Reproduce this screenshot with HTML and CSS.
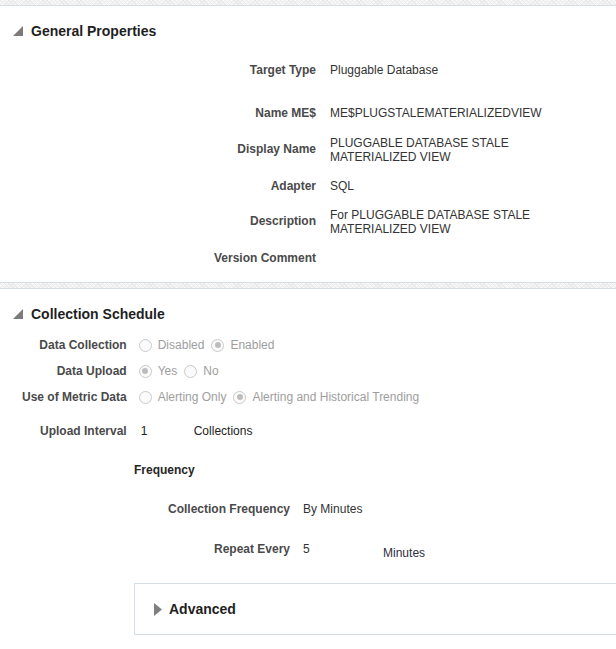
FILE: index.html
```html
<!DOCTYPE html>
<html>
<head>
<meta charset="utf-8">
<title>Metric</title>
<link rel="stylesheet" href="styles.css">
</head>
<body>
<div class="hatch top-strip"></div>

<section class="panel general">
  <h2 class="sec-head">
    <svg class="tri-down" width="10" height="10" viewBox="0 0 10 10"><polygon points="10,0 10,10 0,10"/></svg>
    <span>General Properties</span>
  </h2>
  <div class="props">
    <div class="lbl first">Target Type</div><div class="val first">Pluggable Database</div>
    <div class="lbl second">Name ME$</div><div class="val second">ME$PLUGSTALEMATERIALIZEDVIEW</div>
    <div class="lbl multi">Display Name</div><div class="val">PLUGGABLE DATABASE STALE MATERIALIZED VIEW</div>
    <div class="lbl">Adapter</div><div class="val">SQL</div>
    <div class="lbl multi">Description</div><div class="val">For PLUGGABLE DATABASE STALE MATERIALIZED VIEW</div>
    <div class="lbl">Version Comment</div><div class="val"></div>
  </div>
</section>

<div class="hatch divider"></div>

<section class="panel schedule">
  <h2 class="sec-head">
    <svg class="tri-down" width="10" height="10" viewBox="0 0 10 10"><polygon points="10,0 10,10 0,10"/></svg>
    <span>Collection Schedule</span>
  </h2>
  <div class="sched">
    <div class="lbl">Data Collection</div>
    <div class="opts">
      <span class="opt"><span class="radio"></span>Disabled</span>
      <span class="opt"><span class="radio on"></span>Enabled</span>
    </div>
    <div class="lbl">Data Upload</div>
    <div class="opts">
      <span class="opt"><span class="radio on"></span>Yes</span>
      <span class="opt"><span class="radio"></span>No</span>
    </div>
    <div class="lbl">Use of Metric Data</div>
    <div class="opts">
      <span class="opt"><span class="radio"></span>Alerting Only</span>
      <span class="opt"><span class="radio on"></span>Alerting and Historical Trending</span>
    </div>
    <div class="lbl spaced">Upload Interval</div>
    <div class="interval spaced"><span class="num">1</span><span>Collections</span></div>
  </div>

  <div class="freq">
    <div class="freq-title">Frequency</div>
    <div class="freq-grid">
      <div class="lbl">Collection Frequency</div><div class="fval">By Minutes</div>
      <div class="lbl">Repeat Every</div>
      <div class="fval repeat"><span class="num5">5</span><span class="unit">Minutes</span></div>
    </div>
    <div class="advanced">
      <svg class="tri-right" width="8" height="13" viewBox="0 0 8 13"><polygon points="0,0 8,6.5 0,13"/></svg>
      <span>Advanced</span>
    </div>
  </div>
</section>
</body>
</html>
```

FILE: styles.css
```css
html, body {
  margin: 0;
  padding: 0;
}

body {
  font-family: "Liberation Sans", Arial, sans-serif;
  font-size: 12px;
  color: #333333;
  background: #ffffff;
  overflow: hidden;
}

.hatch {
  background-color: #f7f7f7;
  background-image:
    repeating-linear-gradient(45deg, #e9e9e9 0 1px, transparent 1px 3px),
    repeating-linear-gradient(-45deg, #ededed 0 1px, transparent 1px 3px);
}

.top-strip {
  height: 5px;
  border-bottom: 1px solid #d6dfe6;
}

.divider {
  height: 5px;
  border-top: 1px solid #d6dfe6;
  border-bottom: 1px solid #d6dfe6;
}

.panel {
  padding-top: 16px;
}

.general {
  padding-bottom: 16px;
}

.schedule {
  overflow: hidden;
  padding-bottom: 15px;
}

.sec-head {
  margin: 0;
  display: flex;
  align-items: center;
  gap: 8px;
  padding-left: 13px;
  font-size: 14px;
  line-height: 18px;
  font-weight: bold;
  color: #1f1f1f;
}

.tri-down {
  fill: #7b7b7b;
  display: block;
}

.lbl {
  font-weight: bold;
  color: #4a4a4a;
  line-height: 16px;
  text-align: right;
  white-space: nowrap;
}

/* General properties grid */
.props {
  margin-top: 22px;
  display: grid;
  grid-template-columns: 316px 240px;
  column-gap: 14px;
  row-gap: 14px;
  align-items: center;
}

.val {
  line-height: 14px;
  color: #333333;
}

.props .first {
  margin-bottom: 13px;
}

.props .second {
  margin-bottom: 1px;
}

.props .multi {
  margin-bottom: 2px;
}

/* Collection schedule */
.sched {
  margin-top: 14px;
  padding-left: 22px;
  display: grid;
  grid-template-columns: auto 1fr;
  column-gap: 12px;
  row-gap: 10px;
  align-items: center;
}

.sched .spaced {
  margin-top: 8px;
}

.opts {
  display: flex;
  align-items: center;
  line-height: 16px;
  color: #9e9e9e;
}

.opt {
  display: flex;
  align-items: center;
  margin-right: 7px;
}

.radio {
  width: 11px;
  height: 11px;
  border: 1px solid #c9c9c9;
  border-radius: 50%;
  background: #fbfbfb;
  margin-right: 6px;
  position: relative;
  box-sizing: content-box;
}

.radio.on::after {
  content: "";
  position: absolute;
  left: 2.5px;
  top: 2.5px;
  width: 6px;
  height: 6px;
  border-radius: 50%;
  background: #bdbdbd;
}

.interval {
  display: flex;
  line-height: 16px;
  color: #222222;
}

.interval .num {
  width: 53px;
  padding-left: 2px;
}

/* Frequency */
.freq {
  margin-top: 23px;
  margin-left: 134px;
}

.freq-title {
  font-weight: bold;
  color: #262626;
  line-height: 16px;
}

.freq-grid {
  margin-top: 23px;
  padding-left: 34px;
  display: grid;
  grid-template-columns: auto 1fr;
  column-gap: 13px;
  row-gap: 24px;
  align-items: start;
}

.fval {
  line-height: 16px;
  color: #333333;
}

.repeat {
  display: flex;
}

.repeat .num5 {
  width: 80px;
}

.repeat .unit {
  margin-top: 4px;
  color: #2f2f3f;
}

.advanced {
  margin-top: 22px;
  margin-right: -40px;
  border: 1px solid #d6dfe6;
  padding: 16px 0 16px 19px;
  display: flex;
  align-items: center;
  gap: 7px;
  font-size: 14px;
  line-height: 18px;
  font-weight: bold;
  color: #1f1f1f;
}

.tri-right {
  display: block;
  fill: #808080;
}
```
